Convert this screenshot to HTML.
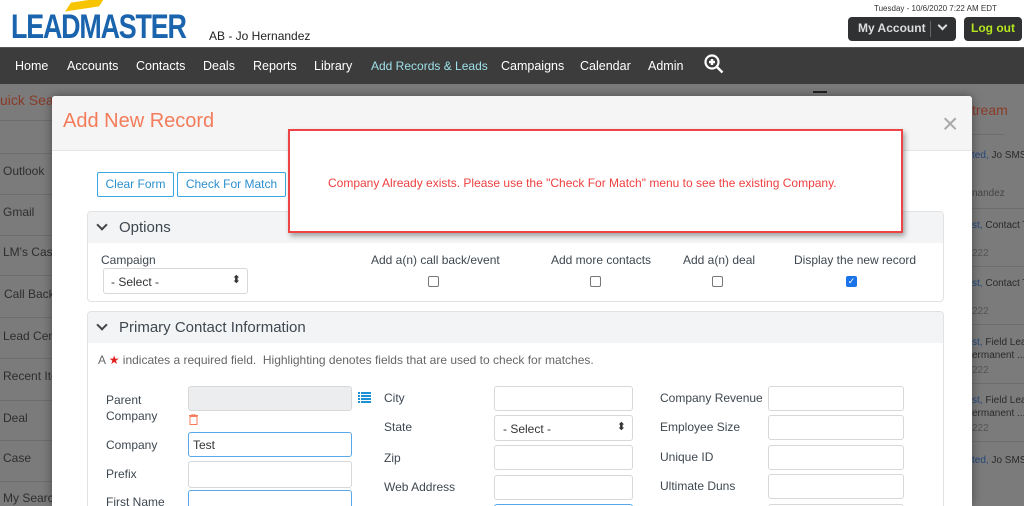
<!DOCTYPE html>
<html><head><meta charset="utf-8"><style>
*{box-sizing:border-box;margin:0;padding:0}
html{overflow:hidden;width:1024px;height:506px}
body{width:1024px;height:506px;overflow:hidden;position:relative;background:#7b7b7b;font-family:"Liberation Sans",sans-serif;font-size:12px;color:#333}
.a{position:absolute;white-space:nowrap}
.hdr{position:absolute;left:0;top:0;width:1024px;height:47px;background:#fff}
.nav{position:absolute;left:0;top:47px;width:1024px;height:37px;background:#3c3c3c;border-top:1px solid #555}
.nav span{position:absolute;top:11px;color:#fff;font-size:12.5px}
.side{color:#2e2e2e;font-size:12px}
.sl{position:absolute;height:1px;background:#6e6e6e}
.modal{position:absolute;left:52px;top:96px;width:920px;height:410px;background:#fff;border-radius:3px 3px 0 0;box-shadow:0 0 10px rgba(0,0,0,.4);overflow:hidden}
.mh{position:absolute;left:0;top:0;width:920px;height:55px;background:#f5f5f5;border-bottom:1px solid #e5e5e5;border-radius:3px 3px 0 0}
.btn{position:absolute;height:25px;border:1px solid #3aa6dd;color:#2a8fcf;font-size:12px;line-height:23px;text-align:center;background:#fff;border-radius:2px}
.panel{position:absolute;border:1px solid #e2e2e2;border-radius:4px;background:#fff}
.ph{position:absolute;left:0;top:0;right:0;height:31px;background:#f3f4f5;border-radius:4px 4px 0 0}
.ph b{position:absolute;left:31px;top:7px;font-weight:normal;font-size:15px;color:#3e4750}
.chev{position:absolute;left:10px;top:9px;width:8px;height:8px;border-right:2px solid #444;border-bottom:2px solid #444;transform:rotate(45deg)}
.inp{position:absolute;height:25px;border:1px solid #d8d8d8;border-radius:3px;background:#fff}
.lbl{position:absolute;font-size:12px;color:#3e4750;white-space:nowrap}
.cb{position:absolute;width:11px;height:11px;border:1px solid #777;border-radius:2px;background:#fff}
.sel::after{content:"⬍";position:absolute;right:6px;top:4px;font-size:11px;color:#333}
</style></head><body>
<div class="hdr">
  <div class="a" style="left:70px;top:0px;width:30px;height:9px;background:#f6c400;transform:skewX(-40deg) rotate(-10deg)"></div>
  <div class="a" style="left:11px;top:9px;font-size:34px;line-height:36px;font-weight:bold;color:#1a63ad;letter-spacing:-1.5px;transform:scaleX(0.79);transform-origin:0 0">LEADMASTER</div>
  <div class="a" style="left:209px;top:29px;font-size:12px;color:#222">AB - Jo Hernandez</div>
  <div class="a" style="left:874px;top:4px;font-size:8px;color:#333">Tuesday ‑ 10/6/2020 7:22 AM EDT</div>
  <div class="a" style="left:848px;top:17px;width:108px;height:24px;background:#2f3133;border-radius:4px;color:#ddd;font-size:12px;font-weight:bold;line-height:23px;padding-left:10px">My Account<span style="position:absolute;left:82px;top:4px;width:1px;height:16px;background:#666"></span><span style="position:absolute;left:91px;top:5px;width:7px;height:7px;border-right:2px solid #ddd;border-bottom:2px solid #ddd;transform:rotate(45deg)"></span></div>
  <div class="a" style="left:964px;top:17px;width:58px;height:24px;background:#2f3133;border-radius:4px;color:#b5e61d;font-size:12px;font-weight:bold;line-height:23px;text-align:center">Log out</div>
</div>
<div class="nav">
  <span style="left:15px">Home</span><span style="left:67px">Accounts</span><span style="left:136px">Contacts</span><span style="left:203px">Deals</span><span style="left:253px">Reports</span><span style="left:314px">Library</span><span style="left:371px;color:#9fe0e8;font-size:12px">Add Records &amp; Leads</span><span style="left:501px">Campaigns</span><span style="left:580px">Calendar</span><span style="left:648px">Admin</span>
  <svg class="a" style="left:703px;top:5px" width="22" height="22" viewBox="0 0 22 22"><circle cx="9" cy="9" r="6.5" fill="none" stroke="#fff" stroke-width="2.2"/><path d="M6 9h6M9 6v6M14 14l5.5 5.5" stroke="#fff" stroke-width="2.4"/></svg>
</div>
<div class="a" style="left:0;top:92px;color:#8a3a28;font-size:14px">uick Sea</div>
<div class="sl" style="left:0;top:120px;width:52px"></div>
<div class="a" style="left:813px;top:91px;width:14px;height:2px;background:#222"></div>
<div class="sl" style="left:0;top:153px;width:52px"></div>
<div class="a side" style="left:3px;top:164px">Outlook</div><div class="sl" style="left:0;top:194px;width:52px"></div>
<div class="a side" style="left:3px;top:205px">Gmail</div><div class="sl" style="left:0;top:235px;width:52px"></div>
<div class="a side" style="left:3px;top:245px">LM's Case</div><div class="sl" style="left:0;top:275px;width:52px"></div>
<div class="a side" style="left:4px;top:287px">Call Back</div><div class="sl" style="left:0;top:317px;width:52px"></div>
<div class="a side" style="left:3px;top:329px">Lead Cent</div><div class="sl" style="left:0;top:358px;width:52px"></div>
<div class="a side" style="left:3px;top:369px">Recent Ite</div><div class="sl" style="left:0;top:400px;width:52px"></div>
<div class="a side" style="left:3px;top:411px">Deal</div><div class="sl" style="left:0;top:440px;width:52px"></div>
<div class="a side" style="left:3px;top:451px">Case</div><div class="sl" style="left:0;top:481px;width:52px"></div>
<div class="a side" style="left:3px;top:491px">My Search</div>
<div class="a" style="left:972px;top:102px;color:#8a3a28;font-size:14px">tream</div>
<div class="sl" style="left:972px;top:134px;width:32px"></div>
<div class="a" style="left:972px;top:150px;font-size:10px;color:#24487a">ted, <span style="color:#2a2a2a">Jo SMS,</span></div>
<div class="a" style="left:972px;top:188px;font-size:10px;color:#444">nandez</div>
<div class="sl" style="left:972px;top:208px;width:52px"></div>
<div class="a" style="left:972px;top:220px;font-size:10px;color:#2a2a2a"><span style="color:#24487a">st,</span> Contact T</div>
<div class="a" style="left:972px;top:248px;font-size:10px;color:#555">222</div>
<div class="sl" style="left:972px;top:266px;width:52px"></div>
<div class="a" style="left:972px;top:278px;font-size:10px;color:#2a2a2a"><span style="color:#24487a">st,</span> Contact T</div>
<div class="a" style="left:972px;top:306px;font-size:10px;color:#555">222</div>
<div class="sl" style="left:972px;top:324px;width:52px"></div>
<div class="a" style="left:972px;top:337px;font-size:10px;color:#2a2a2a"><span style="color:#24487a">st,</span> Field Leac</div>
<div class="a" style="left:972px;top:350px;font-size:10px;color:#2a2a2a">ermanent ...</div>
<div class="a" style="left:972px;top:365px;font-size:10px;color:#555">222</div>
<div class="sl" style="left:972px;top:383px;width:52px"></div>
<div class="a" style="left:972px;top:395px;font-size:10px;color:#2a2a2a"><span style="color:#24487a">st,</span> Field Leac</div>
<div class="a" style="left:972px;top:408px;font-size:10px;color:#2a2a2a">ermanent ...</div>
<div class="a" style="left:972px;top:423px;font-size:10px;color:#555">222</div>
<div class="sl" style="left:972px;top:441px;width:52px"></div>
<div class="a" style="left:972px;top:455px;font-size:10px;color:#24487a">ted, <span style="color:#2a2a2a">Jo SMS,</span></div>

<div class="modal">
  <div class="mh"></div>
  <div class="a" style="left:11px;top:14px;font-size:20px;color:#f47c5a">Add New Record</div>
  <div class="a" style="left:890px;top:14px;font-size:28px;color:#aaa;line-height:28px">×</div>
  <div class="btn" style="left:45px;top:76px;width:77px">Clear Form</div>
  <div class="btn" style="left:125px;top:76px;width:109px">Check For Match</div>

  <div class="panel" style="left:35px;top:115px;width:857px;height:91px">
    <div class="ph"><i class="chev"></i><b>Options</b></div>
    <div class="lbl" style="left:13px;top:41px">Campaign</div>
    <div class="inp sel" style="left:15px;top:56px;width:145px;height:26px;padding:6px 7px">- Select -</div>
    <div class="lbl" style="left:283px;top:41px">Add a(n) call back/event</div><div class="cb" style="left:340px;top:64px"></div>
    <div class="lbl" style="left:463px;top:41px">Add more contacts</div><div class="cb" style="left:502px;top:64px"></div>
    <div class="lbl" style="left:595px;top:41px">Add a(n) deal</div><div class="cb" style="left:624px;top:64px"></div>
    <div class="lbl" style="left:706px;top:41px">Display the new record</div><div class="cb" style="left:758px;top:64px;background:#1a73e8;border-color:#1a73e8;color:#fff;font-size:9px;line-height:9px;text-align:center">✓</div>
  </div>

  <div class="panel" style="left:35px;top:215px;width:857px;height:220px">
    <div class="ph"><i class="chev"></i><b>Primary Contact Information</b></div>
    <div class="lbl" style="left:10px;top:41px;color:#666">A <span style="color:#e02020">★</span> indicates a required field.&nbsp; Highlighting denotes fields that are used to check for matches.</div>
    <div class="lbl" style="left:18px;top:80px;line-height:16px">Parent<br>Company</div>
    <div class="inp" style="left:100px;top:74px;width:164px;background:#ebedef"></div>
    <svg class="a" style="left:270px;top:80px" width="13" height="11"><g fill="#1e90d6"><rect x="0" y="0" width="2" height="2"/><rect x="3" y="0" width="10" height="2"/><rect x="0" y="3" width="2" height="2"/><rect x="3" y="3" width="10" height="2"/><rect x="0" y="6" width="2" height="2"/><rect x="3" y="6" width="10" height="2"/><rect x="0" y="9" width="2" height="2"/><rect x="3" y="9" width="10" height="2"/></g></svg>
    <svg class="a" style="left:101px;top:102px" width="9" height="11"><path d="M0 1.5h9M3 1.5V0h3v1.5M1 2.5h7v8H1z" fill="none" stroke="#f47c5a" stroke-width="1"/></svg>
    <div class="lbl" style="left:18px;top:126px">Company</div>
    <div class="inp" style="left:100px;top:120px;width:164px;border-color:#5aa8ea;padding:5px 4px">Test</div>
    <div class="lbl" style="left:18px;top:155px">Prefix</div>
    <div class="inp" style="left:100px;top:149px;width:164px;height:27px"></div>
    <div class="lbl" style="left:18px;top:183px">First Name</div>
    <div class="inp" style="left:100px;top:178px;width:164px;border-color:#5aa8ea"></div>

    <div class="lbl" style="left:296px;top:79px">City</div><div class="inp" style="left:406px;top:74px;width:139px"></div>
    <div class="lbl" style="left:296px;top:108px">State</div><div class="inp sel" style="left:406px;top:103px;width:139px;height:26px;padding:6px 8px">- Select -</div>
    <div class="lbl" style="left:296px;top:139px">Zip</div><div class="inp" style="left:406px;top:133px;width:139px"></div>
    <div class="lbl" style="left:296px;top:168px">Web Address</div><div class="inp" style="left:406px;top:163px;width:139px"></div>
    <div class="inp" style="left:406px;top:192px;width:139px;border-color:#5aa8ea"></div>

    <div class="lbl" style="left:572px;top:79px">Company Revenue</div><div class="inp" style="left:680px;top:74px;width:136px"></div>
    <div class="lbl" style="left:572px;top:108px">Employee Size</div><div class="inp" style="left:680px;top:103px;width:136px"></div>
    <div class="lbl" style="left:572px;top:138px">Unique ID</div><div class="inp" style="left:680px;top:133px;width:136px"></div>
    <div class="lbl" style="left:572px;top:167px">Ultimate Duns</div><div class="inp" style="left:680px;top:162px;width:136px"></div>
    <div class="inp" style="left:680px;top:192px;width:136px"></div>
  </div>

  <div class="a" style="left:236px;top:33px;width:615px;height:104px;background:#fff;border:2px solid #ee4444;box-shadow:2px 3px 5px rgba(0,0,0,.35)">
    <div class="a" style="left:38px;top:45px;color:#ee4040;font-size:12px">Company Already exists. Please use the "Check For Match" menu to see the existing Company.</div>
  </div>
</div>
</body></html>
